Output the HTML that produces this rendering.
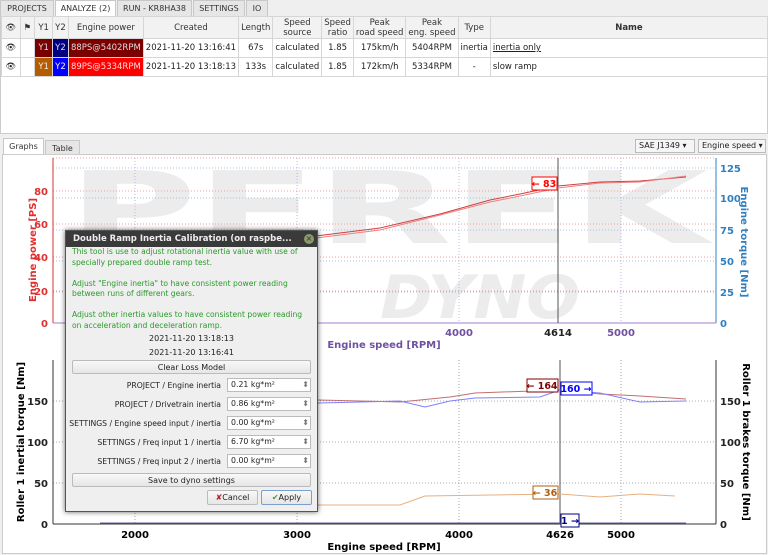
<!DOCTYPE html>
<html><head><meta charset="utf-8"><style>
*{margin:0;padding:0;box-sizing:border-box}
body{width:768px;height:555px;overflow:hidden;background:#efefef;font-family:"DejaVu Sans","Liberation Sans",sans-serif;font-size:9px;color:#222;position:relative}
.abs{position:absolute}
.tab{position:absolute;top:0;height:16px;border:1px solid #c8c8c8;border-bottom:none;background:#e6e6e6;font-size:8px;line-height:15px;text-align:center;color:#333;white-space:nowrap;overflow:hidden}
table{border-collapse:collapse;position:absolute;left:1px;top:16px;background:#fff}
td{border:1px solid #d6d6d6;font-size:8.5px;text-align:center;white-space:nowrap;padding:0 2px;height:19px}
thead td{background:#f2f2f2;height:22px;line-height:10px;color:#333}
.dlg{position:absolute;left:65px;top:230px;width:253px;height:282px;background:#efefef;box-shadow:0 0 5px rgba(0,0,0,.6);border:1px solid #555}
.btn{position:absolute;background:linear-gradient(#f8f8f8,#e6e6e6);border:1px solid #bbb;border-radius:2px;font-size:8px;text-align:center;line-height:13px}
.lbl{position:absolute;right:96px;font-size:7.7px;text-align:right;white-space:nowrap}
.spin{position:absolute;left:161px;width:84px;height:14px;background:#fff;border:1px solid #bbb;font-size:7.8px;line-height:12px;padding-left:3px}
.spin:after{content:"⬍";position:absolute;right:1px;top:0;font-size:8px;color:#777}
</style></head><body>
<div class="tab" style="left:0;width:54px">PROJECTS</div>
<div class="tab" style="left:55px;width:61px;background:#fff;height:17px">ANALYZE (2)</div>
<div class="tab" style="left:117px;width:75px">RUN - KR8HA38</div>
<div class="tab" style="left:193px;width:52px">SETTINGS</div>
<div class="tab" style="left:246px;width:22px">IO</div>
<div class="abs" style="left:0;top:16px;width:768px;height:118px;background:#fff;border:1px solid #ccc"></div>
<table>
<thead><tr><td style="width:19px">👁</td><td style="width:15px">⚑</td><td style="width:18px">Y1</td><td style="width:16px">Y2</td><td style="width:68px">Engine power</td><td style="width:84px">Created</td><td style="width:33px">Length</td><td style="width:46px">Speed<br>source</td><td style="width:28px">Speed<br>ratio</td><td style="width:52px">Peak<br>road speed</td><td style="width:48px">Peak<br>eng. speed</td><td style="width:29px">Type</td><td style="width:308px;font-weight:bold">Name</td></tr></thead>
<tr><td>👁</td><td></td><td style="background:#7a0000;color:#ddd">Y1</td><td style="background:#000080;color:#ddd">Y2</td><td style="background:#7a0000;color:#ddd">88PS@5402RPM</td><td>2021-11-20 13:16:41</td><td>67s</td><td>calculated</td><td>1.85</td><td>175km/h</td><td>5404RPM</td><td>inertia</td><td style="text-align:left;text-decoration:underline">inertia only</td></tr>
<tr><td>👁</td><td></td><td style="background:#b35c00;color:#eee">Y1</td><td style="background:#0000ff;color:#eee">Y2</td><td style="background:#ff0000;color:#fdd">89PS@5334RPM</td><td>2021-11-20 13:18:13</td><td>133s</td><td>calculated</td><td>1.85</td><td>172km/h</td><td>5334RPM</td><td>-</td><td style="text-align:left">slow ramp</td></tr>
</table>
<div class="tab" style="left:3px;top:138px;width:41px;background:#fff;height:16px">Graphs</div>
<div class="tab" style="left:45px;top:140px;width:35px;height:14px">Table</div>
<div class="abs" style="left:635px;top:139px;width:60px;height:14px;border:1px solid #bbb;background:#f5f5f5;font-size:8px;line-height:12px;padding-left:3px;white-space:nowrap">SAE J1349 ▾</div>
<div class="abs" style="left:698px;top:139px;width:68px;height:14px;border:1px solid #bbb;background:#f5f5f5;font-size:8px;line-height:12px;padding-left:3px;white-space:nowrap;overflow:hidden">Engine speed ▾</div>
<div class="abs" style="left:2px;top:154px;width:765px;height:400px;background:#fff;border:1px solid #ccc"></div>
<svg class="abs" style="left:0;top:0" width="768" height="555" font-family="DejaVu Sans,Liberation Sans,sans-serif">
<g fill="#ececec" font-weight="bold"><text x="68" y="243" font-size="100" textLength="640" lengthAdjust="spacingAndGlyphs">PEREK</text>
<text x="380" y="318" font-size="60" font-style="italic" textLength="200" lengthAdjust="spacingAndGlyphs">DYNO</text></g>
<g stroke-dasharray="1,2" stroke-width="1">
<g stroke="#f0a0a0"><line x1="53" y1="158" x2="716" y2="158"/><line x1="53" y1="191" x2="716" y2="191"/><line x1="53" y1="224" x2="716" y2="224"/><line x1="53" y1="257" x2="716" y2="257"/><line x1="53" y1="291" x2="716" y2="291"/></g>
<g stroke="#a0c4e0"><line x1="53" y1="168" x2="716" y2="168"/><line x1="53" y1="198" x2="716" y2="198"/><line x1="53" y1="230" x2="716" y2="230"/><line x1="53" y1="261" x2="716" y2="261"/><line x1="53" y1="292" x2="716" y2="292"/></g>
<g stroke="#c8b0e0"><line x1="135" y1="158" x2="135" y2="323"/><line x1="297" y1="158" x2="297" y2="323"/><line x1="459" y1="158" x2="459" y2="323"/><line x1="621" y1="158" x2="621" y2="323"/></g>
<g stroke="#aaa"><line x1="53" y1="401" x2="716" y2="401"/><line x1="53" y1="442" x2="716" y2="442"/><line x1="53" y1="483" x2="716" y2="483"/><line x1="135" y1="360" x2="135" y2="524"/><line x1="297" y1="360" x2="297" y2="524"/><line x1="459" y1="360" x2="459" y2="524"/><line x1="621" y1="360" x2="621" y2="524"/></g>
</g>
<line x1="53" y1="158" x2="53" y2="323" stroke="#e03030"/><line x1="716" y1="158" x2="716" y2="323" stroke="#3080c0"/><line x1="53" y1="323" x2="716" y2="323" stroke="#a080d0"/>
<line x1="53" y1="360" x2="53" y2="524" stroke="#333"/><line x1="716" y1="360" x2="716" y2="524" stroke="#333"/><line x1="53" y1="524" x2="716" y2="524" stroke="#333"/>
<line x1="558" y1="158" x2="558" y2="323" stroke="#555"/><line x1="560" y1="360" x2="560" y2="524" stroke="#555"/>
<g font-size="10" font-weight="bold" fill="#e03030" text-anchor="end"><text x="48" y="195">80</text><text x="48" y="228">60</text><text x="48" y="261">40</text><text x="48" y="295">20</text><text x="48" y="327">0</text></g>
<g font-size="10" font-weight="bold" fill="#3080c0"><text x="720" y="172">125</text><text x="720" y="202">100</text><text x="720" y="234">75</text><text x="720" y="265">50</text><text x="720" y="296">25</text><text x="720" y="327">0</text></g>
<text transform="translate(36,250) rotate(-90)" font-size="10" font-weight="bold" fill="#e03030" text-anchor="middle">Engine power [PS]</text>
<text transform="translate(741,242) rotate(90)" font-size="10" font-weight="bold" fill="#3080c0" text-anchor="middle">Engine torque [Nm]</text>
<g font-size="10" font-weight="bold" text-anchor="middle"><text x="459" y="336" fill="#7050a0">4000</text><text x="558" y="336" fill="#222">4614</text><text x="621" y="336" fill="#7050a0">5000</text><text x="384" y="348" fill="#7050a0">Engine speed [RPM]</text></g>
<path d="M300 238 L380 228 L440 214 L490 200 L520 194 L558 186 L600 182 L640 181 L686 177" stroke="#d04040" fill="none"/>
<path d="M300 240 L380 230 L440 215 L490 202 L520 196 L558 188 L600 183 L640 182 L686 176" stroke="#f08080" fill="none"/>
<rect x="532" y="177" width="25" height="13" fill="#fff" stroke="#f00"/><text x="544" y="187" font-size="9.5" font-weight="bold" fill="#f00" text-anchor="middle">← 83</text>
<g font-size="10" font-weight="bold" text-anchor="end" fill="#222"><text x="48" y="405">150</text><text x="48" y="446">100</text><text x="48" y="487">50</text><text x="48" y="528">0</text></g>
<g font-size="10" font-weight="bold" fill="#222"><text x="720" y="405">150</text><text x="720" y="446">100</text><text x="720" y="487">50</text><text x="720" y="528">0</text></g>
<text transform="translate(24,442) rotate(-90)" font-size="10" font-weight="bold" text-anchor="middle">Roller 1 inertial torque [Nm]</text>
<text transform="translate(743,442) rotate(90)" font-size="10" font-weight="bold" text-anchor="middle">Roller 1 brakes torque [Nm]</text>
<g font-size="10" font-weight="bold" text-anchor="middle"><text x="135" y="538">2000</text><text x="297" y="538">3000</text><text x="459" y="538">4000</text><text x="560" y="538">4626</text><text x="621" y="538">5000</text><text x="384" y="550">Engine speed [RPM]</text></g>
<path d="M318 400 L400 402 L450 397 L475 393 L560 390 L600 394 L640 396 L686 399" stroke="#c07070" fill="none"/>
<path d="M318 403 L400 401 L425 407 L450 401 L475 398 L540 397 L560 390 L600 393 L640 402 L686 401" stroke="#8080ff" fill="none"/>
<path d="M318 505 L400 505 L425 496 L560 494 L600 497 L640 494 L675 496" stroke="#e8b080" fill="none"/>
<path d="M100 523 L686 523" stroke="#6060a0" fill="none"/>
<rect x="527" y="379" width="31" height="13" fill="#fff" stroke="#800000"/><text x="542" y="389" font-size="9.5" font-weight="bold" fill="#800000" text-anchor="middle">← 164</text>
<rect x="561" y="382" width="31" height="13" fill="#fff" stroke="#00f"/><text x="576" y="392" font-size="9.5" font-weight="bold" fill="#00f" text-anchor="middle">160 →</text>
<rect x="533" y="486" width="25" height="13" fill="#fff" stroke="#b06010"/><text x="545" y="496" font-size="9.5" font-weight="bold" fill="#b06010" text-anchor="middle">← 36</text>
<rect x="561" y="514" width="18" height="13" fill="#fff" stroke="#000080"/><text x="570" y="524" font-size="9.5" font-weight="bold" fill="#000080" text-anchor="middle">1 →</text>
</svg>
<div class="dlg">
<div class="abs" style="left:0;top:0;width:251px;height:16px;background:#3a3a3a;color:#eee;font-weight:bold;font-size:8.5px;line-height:16px;padding-left:7px;white-space:nowrap;overflow:hidden">Double Ramp Inertia Calibration (on raspbe...</div>
<div class="abs" style="left:238px;top:3px;width:10px;height:10px;border-radius:50%;background:#8a9a6a;color:#333;font-size:8px;line-height:10px;text-align:center">×</div>
<div class="abs" style="left:6px;top:16px;width:245px;color:#2a9a2a;font-size:7.6px;line-height:10.5px;white-space:nowrap">This tool is use to adjust rotational inertia value with use of<br>specially prepared double ramp test.<br><br>Adjust "Engine inertia" to have consistent power reading<br>between runs of different gears.<br><br>Adjust other inertia values to have consistent power reading<br>on acceleration and deceleration ramp.</div>
<div class="abs" style="left:0;top:103px;width:251px;text-align:center;font-size:8px">2021-11-20 13:18:13</div>
<div class="abs" style="left:0;top:117px;width:251px;text-align:center;font-size:8px">2021-11-20 13:16:41</div>
<div class="btn" style="left:6px;top:129px;width:239px;height:14px">Clear Loss Model</div>
<div class="lbl" style="top:150px">PROJECT / Engine inertia</div><div class="spin" style="top:147px">0.21 kg*m²</div>
<div class="lbl" style="top:169px">PROJECT / Drivetrain inertia</div><div class="spin" style="top:166px">0.86 kg*m²</div>
<div class="lbl" style="top:188px">SETTINGS / Engine speed input / inertia</div><div class="spin" style="top:185px">0.00 kg*m²</div>
<div class="lbl" style="top:207px">SETTINGS / Freq input 1 / inertia</div><div class="spin" style="top:204px">6.70 kg*m²</div>
<div class="lbl" style="top:226px">SETTINGS / Freq input 2 / inertia</div><div class="spin" style="top:223px">0.00 kg*m²</div>
<div class="btn" style="left:6px;top:242px;width:239px;height:14px">Save to dyno settings</div>
<div class="btn" style="left:141px;top:259px;width:51px;height:15px"><span style="color:#c02020;font-weight:bold">✘</span>Cancel</div>
<div class="btn" style="left:195px;top:259px;width:51px;height:15px;border-color:#7aa0d0"><span style="color:#40a040;font-weight:bold">✔</span>Apply</div>
</div>
</body></html>
